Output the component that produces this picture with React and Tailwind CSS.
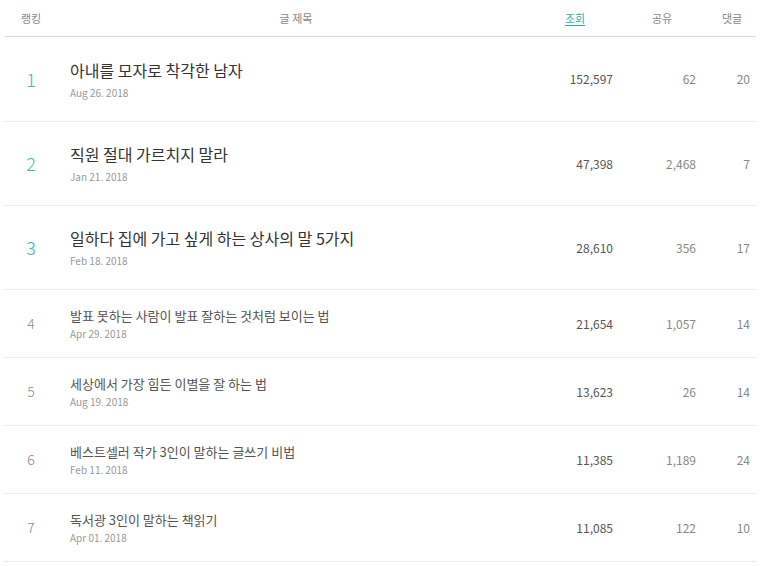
const posts = [
  { rank: 1, title: "아내를 모자로 착각한 남자", date: "Aug 26. 2018", views: "152,597", shares: "62", comments: "20" },
  { rank: 2, title: "직원 절대 가르치지 말라", date: "Jan 21. 2018", views: "47,398", shares: "2,468", comments: "7" },
  { rank: 3, title: "일하다 집에 가고 싶게 하는 상사의 말 5가지", date: "Feb 18. 2018", views: "28,610", shares: "356", comments: "17" },
  { rank: 4, title: "발표 못하는 사람이 발표 잘하는 것처럼 보이는 법", date: "Apr 29. 2018", views: "21,654", shares: "1,057", comments: "14" },
  { rank: 5, title: "세상에서 가장 힘든 이별을 잘 하는 법", date: "Aug 19. 2018", views: "13,623", shares: "26", comments: "14" },
  { rank: 6, title: "베스트셀러 작가 3인이 말하는 글쓰기 비법", date: "Feb 11. 2018", views: "11,385", shares: "1,189", comments: "24" },
  { rank: 7, title: "독서광 3인이 말하는 책읽기", date: "Apr 01. 2018", views: "11,085", shares: "122", comments: "10" },
];

const cols = "grid grid-cols-[54px_476px_82px_92px_48px] items-center";

function Row({ post }) {
  const top = post.rank <= 3;
  const height = post.rank === 1 ? "h-[85px]" : top ? "h-[84px]" : "h-[68px]";

  return (
    <div className={`${cols} border-b border-[#ececec] ${height}`}>
      <div
        className={`text-center font-light ${
          top ? "text-[18px] text-[#3db7b0]" : "text-[14px] text-[#8a8a8a]"
        }`}
      >
        {post.rank}
      </div>
      <div className="pl-3">
        <div
          className={
            top
              ? "text-[16px] leading-5 text-[#333]"
              : "text-[13px] leading-4 text-[#555]"
          }
        >
          {post.title}
        </div>
        <div className={`text-[10px] leading-3 text-[#999] ${top ? "mt-[7px]" : "mt-1"}`}>
          {post.date}
        </div>
      </div>
      <div className="text-right pr-[3px] text-[12px] text-[#555]">{post.views}</div>
      <div className="text-right pr-[12px] text-[12px] text-[#888]">{post.shares}</div>
      <div className="text-right pr-[6px] text-[12px] text-[#888]">{post.comments}</div>
    </div>
  );
}

export default function App() {
  return (
    <div
      className="min-h-[566px] bg-white"
      style={{ fontFamily: '"Noto Sans CJK KR", "Noto Sans", sans-serif' }}
    >
      <div className="ml-1 w-[752px]">
        <div className={`${cols} h-[37px] border-b border-[#d9d9d9] text-[11px] text-[#888]`}>
          <div className="text-center">랭킹</div>
          <div className="text-center">글 제목</div>
          <div className="text-center">
            <span className="text-[#1fb3a6] underline underline-offset-2">조회</span>
          </div>
          <div className="text-center">공유</div>
          <div className="text-center">댓글</div>
        </div>
        {posts.map((post) => (
          <Row key={post.rank} post={post} />
        ))}
      </div>
    </div>
  );
}
